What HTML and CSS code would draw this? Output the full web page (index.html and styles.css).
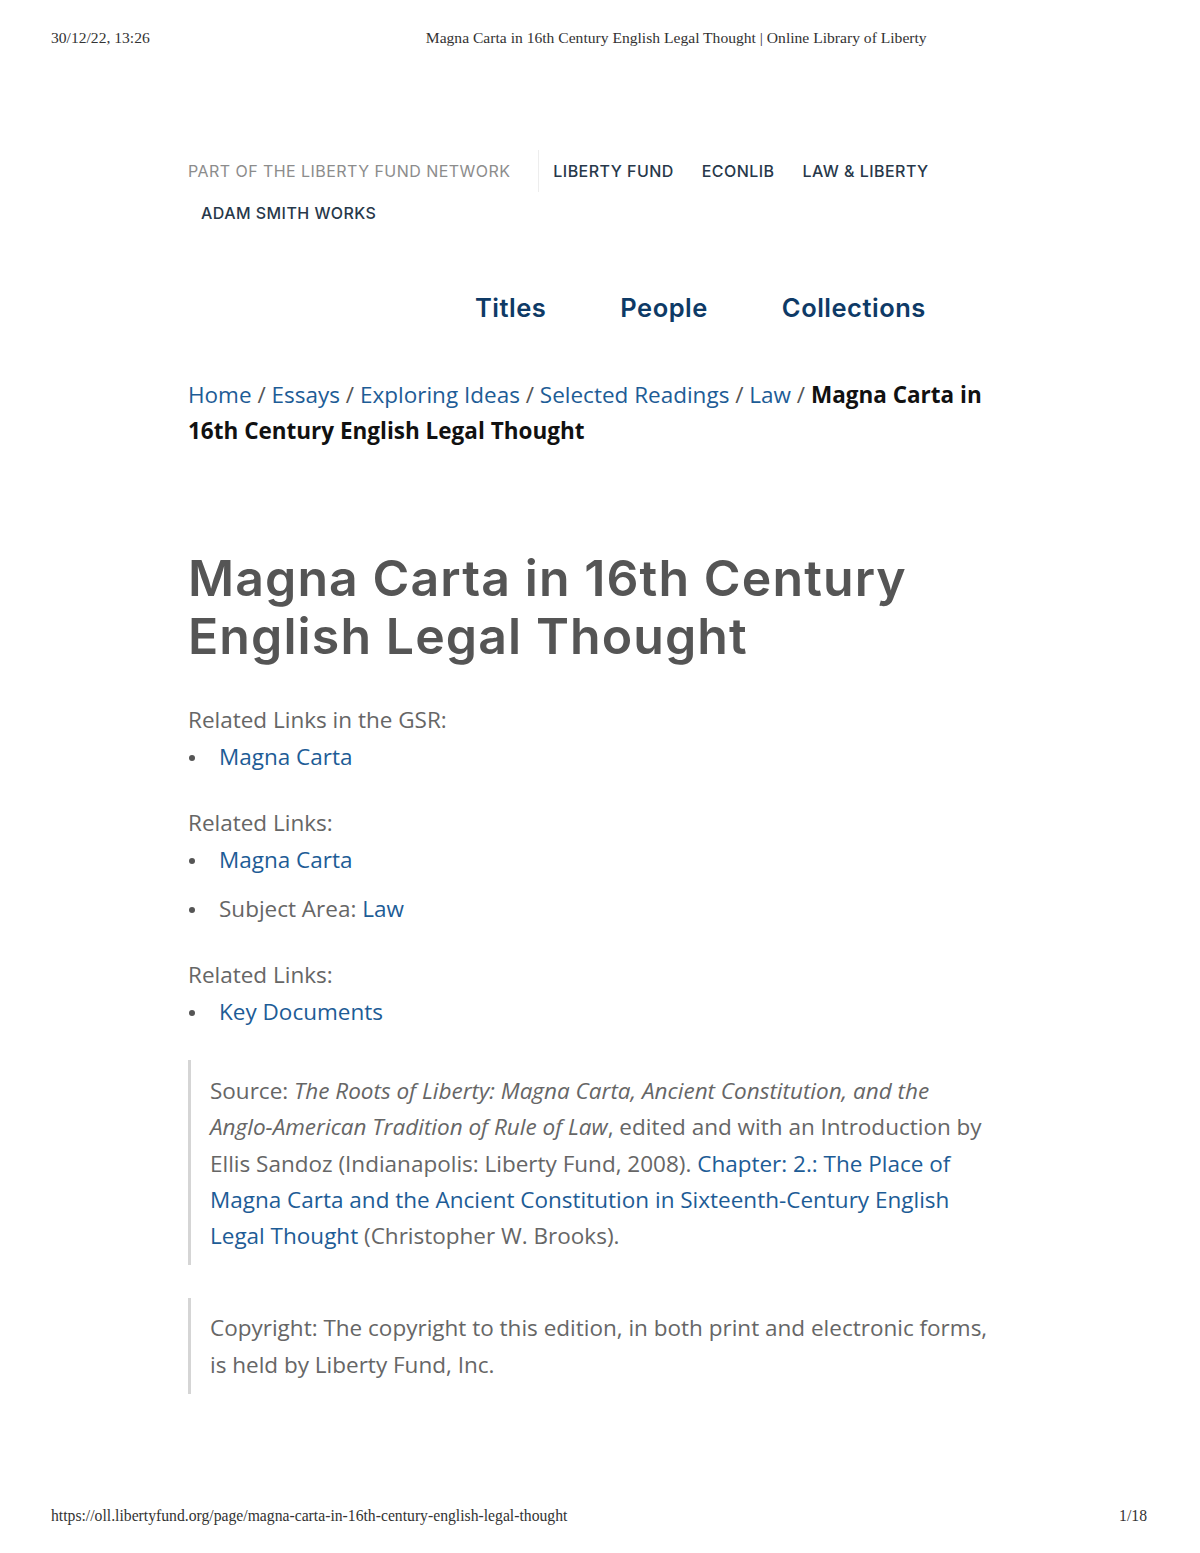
FILE: index.html
```html
<!DOCTYPE html>
<html lang="en">
<head>
<meta charset="UTF-8">
<title>Magna Carta in 16th Century English Legal Thought | Online Library of Liberty</title>
<link rel="stylesheet" href="styles.css">
</head>
<body>
<!-- print header -->
<div class="print-head">
  <span class="print-date">30/12/22, 13:26</span>
  <span class="print-title">Magna Carta in 16th Century English Legal Thought | Online Library of Liberty</span>
</div>

<div class="page">
  <!-- network bar -->
  <div class="network">
    <span class="network-label">PART OF THE LIBERTY FUND NETWORK</span>
    <a href="#" class="first">LIBERTY FUND</a>
    <a href="#">ECONLIB</a>
    <a href="#">LAW &amp; LIBERTY</a>
    <a href="#">ADAM SMITH WORKS</a>
  </div>

  <!-- main nav -->
  <nav class="main-nav">
    <a href="#">Titles</a>
    <a href="#">People</a>
    <a href="#">Collections</a>
  </nav>

  <div class="crumbs">
    <a href="#">Home</a> / <a href="#">Essays</a> / <a href="#">Exploring Ideas</a> / <a href="#">Selected Readings</a> / <a href="#">Law</a> / <b>Magna Carta in 16th Century English Legal Thought</b>
  </div>

  <h1>Magna Carta in 16th Century English Legal Thought</h1>

  <div class="related">
    <p>Related Links in the GSR:</p>
    <ul>
      <li><a href="#">Magna Carta</a></li>
    </ul>
  </div>

  <div class="related">
    <p>Related Links:</p>
    <ul>
      <li><a href="#">Magna Carta</a></li>
      <li>Subject Area: <a href="#">Law</a></li>
    </ul>
  </div>

  <div class="related">
    <p>Related Links:</p>
    <ul>
      <li><a href="#">Key Documents</a></li>
    </ul>
  </div>

  <blockquote class="note">
    Source: <i>The Roots of Liberty: Magna Carta, Ancient Constitution, and the Anglo-American Tradition of Rule of Law</i>, edited and with an Introduction by Ellis Sandoz (Indianapolis: Liberty Fund, 2008). <a href="#">Chapter: 2.: The Place of Magna Carta and the Ancient Constitution in Sixteenth-Century English Legal Thought</a> (Christopher W. Brooks).
  </blockquote>

  <blockquote class="note">
    Copyright: The copyright to this edition, in both print and electronic forms, is held by Liberty Fund, Inc.
  </blockquote>
</div>

<!-- print footer -->
<div class="print-foot">
  <span>https://oll.libertyfund.org/page/magna-carta-in-16th-century-english-legal-thought</span>
  <span>1/18</span>
</div>
</body>
</html>
```

FILE: styles.css
```css
/* ==== general ==== */
*{box-sizing:border-box;margin:0;padding:0}
body{
  width:1200px;height:1553px;
  font-family:"Open Sans",sans-serif;
  color:#555;background:#fff;
  display:flex;flex-direction:column;
}
a{text-decoration:none;color:#1d5c96}
ul{list-style:none}

/* ==== print header / footer ==== */
.print-head,.print-foot{
  font-family:"Liberation Serif",serif;font-size:15.6px;color:#333;
  display:flex;
}
.print-head{padding:29px 0 0 51px;height:60px}
.print-title{margin-left:276px}
.print-foot{
  margin-top:auto;padding:0 53px 28px 51px;
  justify-content:space-between;font-size:15.7px;
}

/* ==== page ==== */
.page{padding:90px 0 0 188px;width:1000px}

.network{
  display:flex;flex-wrap:wrap;width:800px;
  font-family:Inter,sans-serif;font-size:16px;font-weight:500;
  line-height:42px;letter-spacing:.45px;
}
.network-label{
  color:#8c8c8c;font-weight:400;
  padding-right:28px;border-right:1px solid #ededed;
}
.network a{color:#27384a;padding:0 15px 0 13px}
.network a.first{padding-left:14px}

.main-nav{
  display:flex;gap:74px;margin-top:54px;padding-left:287px;
  font-family:Inter,sans-serif;font-weight:600;font-size:25.5px;
  line-height:40px;letter-spacing:.5px;
}
.main-nav a{color:#0e3a66}

.crumbs{
  margin-top:49px;font-size:22.5px;line-height:36px;color:#555;
}
.crumbs b{color:#111;font-weight:700}

h1{
  margin-top:100px;
  font-family:Inter,sans-serif;font-weight:600;
  font-size:50px;line-height:58px;color:#555;letter-spacing:1.1px;
  width:790px;
}

.related{font-size:22.5px;line-height:36px;color:#666;margin-top:30px}
h1 + .related{margin-top:37px}
.related li{position:relative;padding-left:31px;margin-top:1px}
.related li + li{margin-top:13px}
.related li::before{
  content:"";position:absolute;left:1px;top:16px;
  width:6px;height:6px;border-radius:50%;background:#555;
}

.note{
  margin-top:30px;border-left:3px solid #d5d5d5;
  padding:13px 0 11px 19px;width:806px;
  font-size:22.5px;line-height:36.25px;color:#666;
}
.note + .note{margin-top:33px;padding-top:12px}
```
